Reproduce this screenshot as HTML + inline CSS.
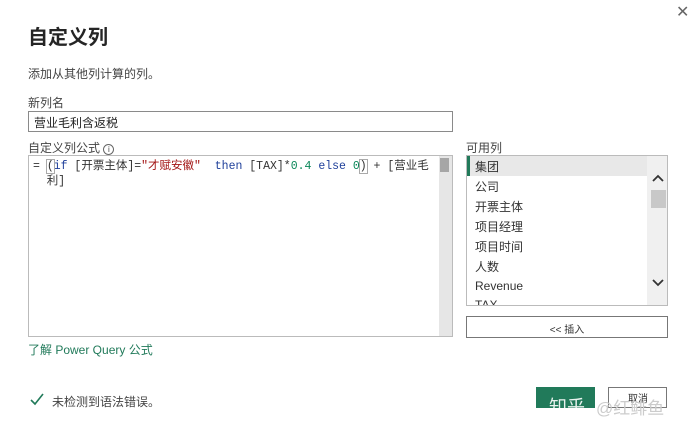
<html><head><style>
body{margin:0;width:698px;height:437px;background:#fff;font-family:"Liberation Sans","Noto Sans CJK SC",sans-serif;color:#333;position:relative;overflow:hidden}
.a{position:absolute}
.f{font-size:12px}
.box{position:absolute;border:1px solid #8a8a8a;box-sizing:border-box;background:#fff}
.mono{font-family:"Liberation Mono","Noto Sans CJK SC",monospace;font-size:11.5px}
.li{position:absolute;left:8px;font-size:12px;color:#333}
</style></head><body>
<div class="a" style="left:676px;top:2px;font-size:16px;color:#666">✕</div>
<div class="a" style="left:28px;top:21px;font-size:20px;font-weight:bold;color:#252525">自定义列</div>
<div class="a f" style="left:28px;top:65px;color:#444">添加从其他列计算的列。</div>
<div class="a f" style="left:28px;top:94px;color:#444">新列名</div>
<div class="box" style="left:28px;top:111px;width:425px;height:21px"><div class="a f" style="left:5px;top:2px;color:#222">营业毛利含返税</div></div>
<div class="a f" style="left:28px;top:139px;color:#444">自定义列公式 <span style="display:inline-block;width:9px;height:9px;border:1px solid #666;border-radius:50%;font-size:8px;line-height:9px;text-align:center">i</span></div>
<div class="box" style="left:28px;top:155px;width:425px;height:182px;border-color:#bbb">
<div class="a mono" style="left:4px;top:3px;color:#333;line-height:15px;white-space:pre">= <span style="outline:1px solid #aaa">(</span><span style="color:#1e3f9a">if</span> [开票主体]=<span style="color:#a31515">"才赋安徽"</span>  <span style="color:#1e3f9a">then</span> [TAX]*<span style="color:#098658">0.4</span> <span style="color:#1e3f9a">else</span> <span style="color:#098658">0</span><span style="outline:1px solid #aaa">)</span> + [营业毛
  利]</div>
<div class="a" style="left:410px;top:0;width:13px;height:180px;background:#e6e6e6"></div>
<div class="a" style="left:411px;top:2px;width:9px;height:14px;background:#a6a6a6"></div>
</div>
<div class="a f" style="left:466px;top:139px;color:#444">可用列</div>
<div class="box" style="left:466px;top:155px;width:202px;height:151px;border-color:#bbb;overflow:hidden">
<div class="a" style="left:0;top:0;width:180px;height:20px;background:#e8e8e8;border-left:3px solid #217a5a"></div>
<div class="li" style="top:2px">集团</div><div class="li" style="top:22px">公司</div><div class="li" style="top:42px">开票主体</div><div class="li" style="top:62px">项目经理</div><div class="li" style="top:82px">项目时间</div><div class="li" style="top:102px">人数</div><div class="li" style="top:123px">Revenue</div><div class="li" style="top:142px">TAX</div>
<div class="a" style="left:180px;top:0;width:21px;height:150px;background:#f0f0f0"></div>
<svg class="a" style="left:184px;top:17px" width="14" height="10"><path d="M2 8L7 3L12 8" stroke="#333" stroke-width="1.8" fill="none"/></svg>
<div class="a" style="left:184px;top:34px;width:15px;height:18px;background:#c8c8c8"></div>
<svg class="a" style="left:184px;top:122px" width="14" height="10"><path d="M2 2L7 7L12 2" stroke="#333" stroke-width="1.8" fill="none"/></svg>
</div>
<div class="box" style="left:466px;top:316px;width:202px;height:22px;border-color:#777"><div class="a" style="left:0;width:200px;top:4px;text-align:center;font-size:10px;color:#333">&lt;&lt; 插入</div></div>
<div class="a f" style="left:28px;top:341px;color:#217a5a">了解 Power Query 公式</div>
<svg class="a" style="left:30px;top:392px" width="14" height="14"><path d="M1 8L5 12L13 2" stroke="#217a5a" stroke-width="1.6" fill="none"/></svg>
<div class="a f" style="left:52px;top:393px;color:#444">未检测到语法错误。</div>
<div class="a" style="left:536px;top:387px;width:59px;height:21px;background:#217a5a"></div>
<div class="a" style="left:608px;top:387px;width:59px;height:21px;border:1px solid #777;box-sizing:border-box"></div>
<div class="a" style="left:628px;top:390px;font-size:10px;color:#333">取消</div>
<div class="a" style="left:549px;top:393px;font-size:18px;color:#fff;opacity:.9">知乎</div>
<div class="a" style="left:596px;top:394px;font-size:17px;color:#ccc">@红鲱鱼</div>
</body></html>
